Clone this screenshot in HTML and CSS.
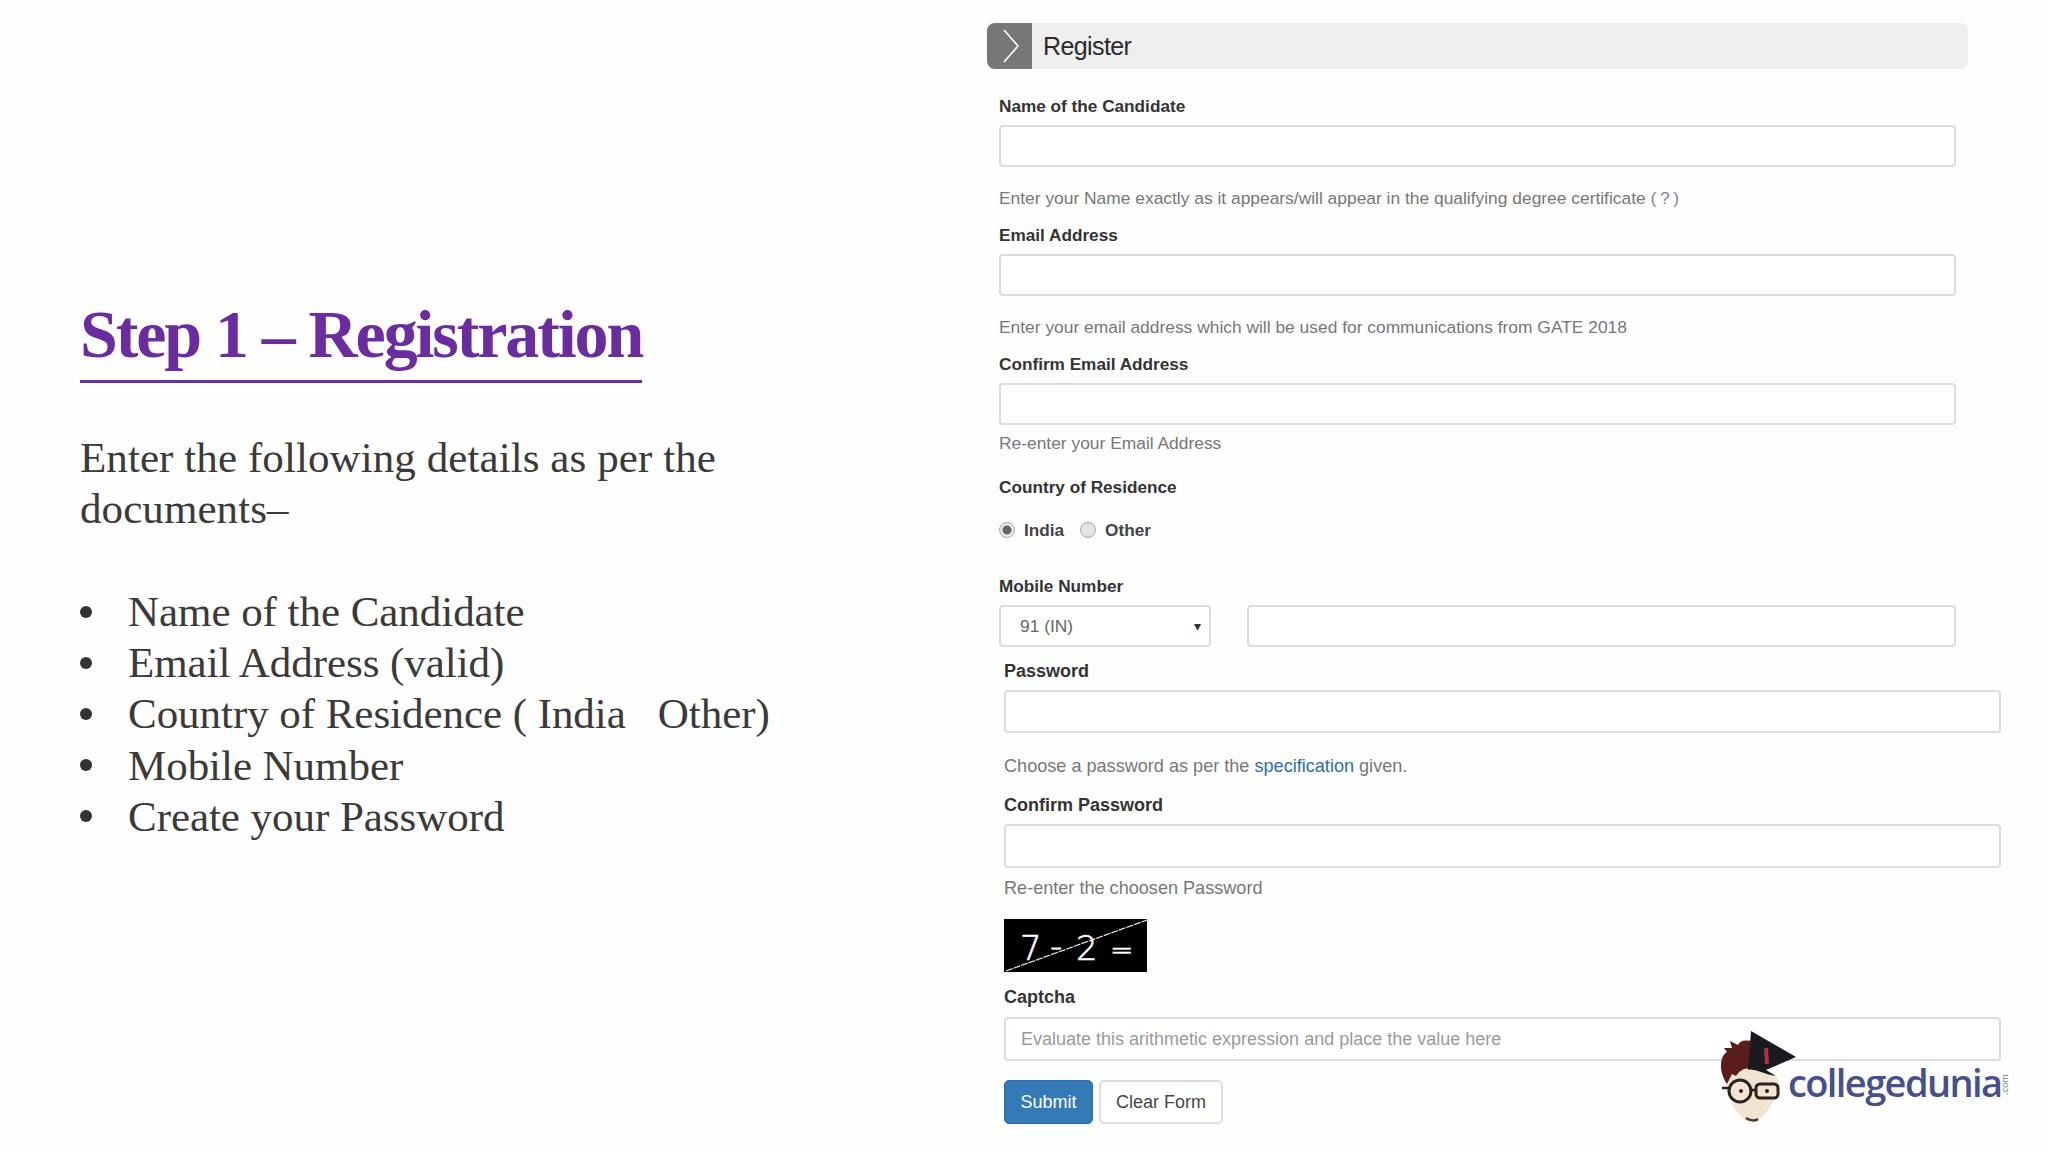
FILE: index.html
```html
<!DOCTYPE html>
<html lang="en">
<head>
<meta charset="utf-8">
<title>Step 1 – Registration</title>
<link rel="stylesheet" href="styles.css">
</head>
<body>
<main class="page">
  <section class="intro">
    <h1 class="title">Step 1 – Registration</h1>
    <p class="lead">Enter the following details as per the documents–</p>
    <ul class="points">
      <li>Name of the Candidate</li>
      <li>Email Address (valid)</li>
      <li>Country of Residence ( India &nbsp; Other)</li>
      <li>Mobile Number</li>
      <li>Create your Password</li>
    </ul>
  </section>
  <section class="panel">
    <header class="bar">
      <span class="bar-icon"><svg width="24" height="34" viewBox="0 0 24 34"><path d="M6 1 L20 17 L6 33" fill="none" stroke="#fff" stroke-width="1.6"/></svg></span>
      <span class="bar-title">Register</span>
    </header>
    <form class="group-a">
      <label class="label m-27">Name of the Candidate</label>
      <input class="input" type="text">
      <p class="help m-21">Enter your Name exactly as it appears/will appear in the qualifying degree certificate <span class="hint">( ? )</span></p>
      <label class="label m-17">Email Address</label>
      <input class="input" type="text">
      <p class="help m-21">Enter your email address which will be used for communications from GATE 2018</p>
      <label class="label m-17">Confirm Email Address</label>
      <input class="input" type="text">
      <p class="help m-8">Re-enter your Email Address</p>
      <label class="label m-24">Country of Residence</label>
      <div class="radios">
        <span class="radio on"></span><span class="radio-text">India</span>
        <span class="radio"></span><span class="radio-text">Other</span>
      </div>
      <label class="label m-36">Mobile Number</label>
      <div class="phone">
        <div class="select"><span>91 (IN)</span><span class="caret">▾</span></div>
        <input class="input" type="text">
      </div>
    </form>
    <form class="group-b">
      <label class="label m-14">Password</label>
      <input class="input tall" type="text">
      <p class="help m-23">Choose a password as per the <span class="link">specification</span> given.</p>
      <label class="label m-19">Confirm Password</label>
      <input class="input taller" type="text">
      <p class="help m-10">Re-enter the choosen Password</p>
      <svg class="captcha" width="143" height="53" viewBox="0 0 143 53">
        <rect width="143" height="53" fill="#000"/>
        <text x="16" y="41" class="captcha-text">7</text>
        <text x="46" y="39" class="captcha-text">-</text>
        <text x="72" y="41" class="captcha-text">2</text>
        <text x="106" y="40" class="captcha-text captcha-eq">=</text>
        <path d="M2 52 L143 1" stroke="#e8e8e8" stroke-width="1.2" stroke-dasharray="7 1"/>
      </svg>
      <label class="label m-15">Captcha</label>
      <input class="input taller" type="text" placeholder="Evaluate this arithmetic expression and place the value here">
      <div class="actions">
        <button class="btn primary" type="button">Submit</button>
        <button class="btn plain" type="button">Clear Form</button>
      </div>
    </form>
  </section>
  <div class="logo">
    <svg width="82" height="94" viewBox="0 0 82 94">
      <path d="M8 46 C8 74 24 92 34 92 C44 92 60 72 60 48 L30 36 Z" fill="#f1e5d2"/>
      <path d="M9 54 C0 40 2 26 9 22 L6 18 L14 18 L12 11 L20 15 C24 8 30 12 34 10 L36 40 C28 36 22 40 18 46 L14 44 Z" fill="#5b1c1c"/>
      <path d="M33 1 L78 27 L48 40 L58 46 C44 44 36 38 30 40 Z" fill="#1b1a20"/>
      <path d="M48 18 L49 34" stroke="#b0313a" stroke-width="4"/>
      <circle cx="22" cy="61" r="11" fill="none" stroke="#2a2320" stroke-width="3"/>
      <rect x="38" y="54" width="22" height="14" rx="4" fill="none" stroke="#2a2320" stroke-width="3"/>
      <path d="M33 60 H38 M4 58 H11" stroke="#2a2320" stroke-width="2.5"/>
      <circle cx="23" cy="61" r="2" fill="#2a2320"/>
      <circle cx="49" cy="61" r="2" fill="#2a2320"/>
      <path d="M28 88 C32 91 38 91 40 89" stroke="#4a3a30" stroke-width="2.5" fill="none"/>
    </svg>
    <span class="logo-name">collegedunia</span>
    <span class="logo-com">.com</span>
  </div>
</main>
</body>
</html>
```
FILE: styles.css
```css
* { box-sizing: border-box; }
html, body { margin: 0; height: 1152px; overflow: hidden; background: #fefefe; }
.page { display: grid; grid-template-columns: 987px 1fr; height: 1152px; position: relative; }

.intro { padding: 300px 0 0 80px; font-family: "Liberation Serif", serif; color: #3a3a3a; }
.title {
  display: inline-block; margin: 0; height: 83px;
  font-size: 68px; line-height: 69px; font-weight: 700; letter-spacing: -2.1px;
  color: #6a2c9e; border-bottom: 3px solid #6a2c9e; white-space: nowrap;
}
.lead { margin: 49px 0 0; width: 660px; font-size: 43px; line-height: 51px; letter-spacing: 0.08px; }
.points { margin: 52px 0 0; padding: 0; list-style: none; font-size: 43px; line-height: 51.2px; letter-spacing: -0.05px; white-space: nowrap; }
.points li { display: flex; align-items: center; }
.points li::before { content: ""; flex: none; width: 12px; height: 12px; margin: 0 36px 0 1px; border-radius: 50%; background: #333; }
.points li { margin-left: -1px; }

.panel { padding-top: 23px; font-family: "Liberation Sans", Arial, sans-serif; }
.bar { display: flex; align-items: center; width: 981px; height: 46px; background: #efefef; border-radius: 8px; }
.bar-icon { display: flex; align-items: center; justify-content: center; width: 45px; height: 46px; background: #777; border-radius: 8px 0 0 8px; }
.bar-title { margin-left: 11px; font-size: 25px; letter-spacing: -0.6px; color: #2b2b2b; }

.group-a { margin-left: 12px; width: 957px; font-size: 17.4px; }
.group-b { margin-left: 17px; width: 997px; font-size: 18.1px; }

.label { display: block; height: 20px; margin-bottom: 9px; font-size: 17.2px; line-height: 20px; font-weight: 700; color: #333; }
.group-b .label { font-size: 18px; }
.group-b .m-15 { margin-bottom: 10px; }
.m-14 { margin-top: 14px; }
.m-15 { margin-top: 15px; }
.m-17 { margin-top: 17px; }
.m-19 { margin-top: 19px; }
.m-24 { margin-top: 24px; }
.m-27 { margin-top: 27px; }
.m-36 { margin-top: 36px; }

.input { display: block; width: 100%; height: 42px; padding: 0 15px; background: #fff; border: 2px solid #dcdcdc; border-radius: 4px; font: 18px "Liberation Sans", Arial, sans-serif; }
.input::placeholder { color: #9a9a9a; opacity: 1; }
.tall { height: 43px; }
.taller { height: 44px; }

.help { height: 20px; margin: 0; font-size: inherit; line-height: 20px; color: #777; white-space: nowrap; }
.help.m-8 { margin-top: 8px; }
.help.m-10 { margin-top: 10px; }
.help.m-21 { margin-top: 21px; }
.help.m-23 { margin-top: 23px; }
.hint { color: #7b8494; letter-spacing: -0.6px; }
.link { color: #2a6cb0; }

.radios { display: flex; align-items: center; height: 20px; margin-top: 23px; }
.radio { display: block; width: 16px; height: 16px; border-radius: 50%; background: #e4e4e4; border: 1px solid #a8a8a8; }
.radio.on { background: radial-gradient(circle, #666 0 4px, #e8e8e8 5px); }
.radio-text { margin: 0 16px 0 9px; font-size: 17.2px; font-weight: 700; color: #444; }

.phone { display: flex; gap: 36px; }
.select { display: flex; flex: none; align-items: center; justify-content: space-between; width: 212px; height: 42px; padding: 0 8px 0 19px; background: #fff; border: 2px solid #dcdcdc; border-radius: 4px; font-size: 17.4px; color: #666; }
.caret { font-size: 14px; color: #333; }

.captcha { display: block; margin-top: 21px; }
.captcha-text { font-family: "DejaVu Sans", sans-serif; font-size: 34px; font-weight: 200; fill: #fff; stroke: #fff; stroke-width: 0.6px; }
.captcha-eq { font-size: 28px; }

.actions { display: flex; gap: 6px; margin-top: 19px; }
.btn { height: 44px; border-radius: 5px; font: 18px "Liberation Sans", Arial, sans-serif; }
.primary { width: 89px; background: #337ab7; border: 1px solid #2e6da4; color: #fff; }
.plain { width: 124px; background: #fff; border: 2px solid #dcdcdc; color: #444; }

.logo { position: absolute; left: 1718px; top: 1030px; width: 300px; height: 94px; }
.logo svg { position: absolute; left: 0; top: 0; }
.logo-name { position: absolute; left: 70px; top: 27px; font: 600 38px/50px "Open Sans", sans-serif; letter-spacing: -1.6px; color: #46508c; }
.logo-com { position: absolute; left: 276px; top: 48px; font: 9px "Open Sans", sans-serif; color: #777; transform: rotate(-90deg); }
```
